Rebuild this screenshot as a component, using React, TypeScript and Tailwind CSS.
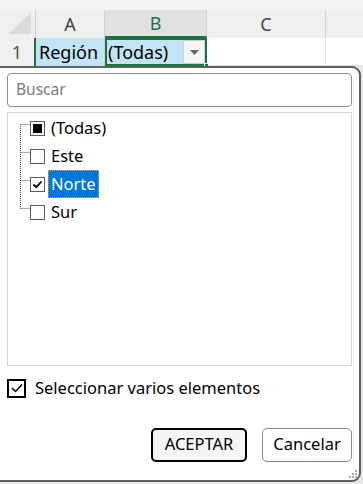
import React from 'react';

const font = { fontFamily: '"Noto Sans", "Open Sans", sans-serif' };

function TreeCheck({ state }: { state: 'none' | 'checked' | 'mixed' }) {
  return (
    <span className="w-[15px] h-[15px] border border-[#5c5c5c] bg-white flex items-center justify-center shrink-0">
      {state === 'mixed' && <span className="w-[9px] h-[9px] bg-black" />}
      {state === 'checked' && (
        <svg width="11" height="11" viewBox="0 0 11 11">
          <path d="M1.5 5.5 L4.2 8.2 L9.5 2.5" stroke="#000" strokeWidth="1.8" fill="none" />
        </svg>
      )}
    </span>
  );
}

export default function App() {
  const items: { label: string; state: 'none' | 'checked' | 'mixed'; selected?: boolean }[] = [
    { label: '(Todas)', state: 'mixed' },
    { label: 'Este', state: 'none' },
    { label: 'Norte', state: 'checked', selected: true },
    { label: 'Sur', state: 'none' },
  ];

  return (
    <div className="relative w-[363px] h-[484px] overflow-hidden bg-white text-black" style={font}>
      {/* hoja */}
      <div className="h-[10px] bg-[#f3f3f3]" />
      <div className="flex h-[28px] bg-[#efefef] text-[18px] text-[#444]">
        <div className="relative w-[36px] border-r border-[#d0d0d0]">
          <svg className="absolute right-[4px] bottom-[4px]" width="22" height="22" viewBox="0 0 22 22">
            <polygon points="22,0 22,22 0,22" fill="#dcdcdc" />
          </svg>
        </div>
        <div className="w-[69px] border-r border-[#d0d0d0] flex items-center justify-center">A</div>
        <div className="w-[102px] border-r border-[#d0d0d0] bg-[#e1e1e1] border-b-2 border-b-[#1e7145] text-[#1e7145] flex items-center justify-center">B</div>
        <div className="w-[119px] border-r border-[#d0d0d0] flex items-center justify-center">C</div>
        <div className="flex-1" />
      </div>
      <div className="flex h-[28px] text-[18px]">
        <div className="w-[36px] bg-[#efefef] border-r-2 border-[#1e7145] text-[#3d6b2c] flex items-center justify-center">1</div>
        <div className="w-[69px] bg-[#c3e4f4] border-r border-[#d0d0d0] flex items-center pl-[3px]">Región</div>
        <div className="relative w-[102px] bg-[#c3e4f4] border-2 border-[#1e7145] flex items-center pl-[1px]">
          (Todas)
          <div className="absolute right-[0px] top-[0px] w-[22px] h-[24px] bg-[#f5f5f5] border border-[#cfcfcf] flex items-center justify-center">
            <svg width="9" height="5" viewBox="0 0 9 5">
              <polygon points="0,0 9,0 4.5,5" fill="#666" />
            </svg>
          </div>
          <span className="absolute right-[-4px] bottom-[-4px] w-[5px] h-[5px] bg-[#1e7145] border border-white" />
        </div>
        <div className="w-[119px] border-r border-b border-[#e1e1e1]" />
        <div className="flex-1 border-b border-[#e1e1e1]" />
      </div>
      <div className="h-[420px] bg-[#e6e6e6]" />

      {/* menú de filtro */}
      <div className="absolute left-[-4px] top-[66px] w-[365px] h-[416px] bg-white border-2 border-[#606060] rounded-r-[9px] flex flex-col pl-[9px] pr-[7px] pt-[5px]">
        <div className="h-[34px] border border-[#8c8c8c] rounded-[4px] flex items-center px-[8px] text-[15.5px] text-[#7a7a7a]">
          Buscar
        </div>
        <div className="relative mt-[5px] h-[254px] border border-[#d6d6d6] pt-[1px]">
          <svg className="absolute left-[12px] top-[11px]" width="12" height="86" viewBox="0 0 12 86">
            <path d="M0.5 0 V85 M0.5 0.5 H11 M0.5 28.5 H11 M0.5 56.5 H11 M0.5 84.5 H11" stroke="#555" strokeWidth="1" strokeDasharray="1 1" fill="none" />
          </svg>
          <div className="flex flex-col pl-[22px]">
            {items.map((it) => (
              <div key={it.label} className="h-[28px] flex items-center gap-[3px] text-[16.5px]">
                <TreeCheck state={it.state} />
                <span
                  className={
                    it.selected
                      ? 'bg-[#0078d7] text-white px-[2px] h-[28px] flex items-center border border-dotted border-[#f0a040]'
                      : 'px-[3px]'
                  }
                >
                  {it.label}
                </span>
              </div>
            ))}
          </div>
        </div>
        <div className="mt-[10px] flex items-center gap-[9px] text-[16.5px]">
          <span className="w-[19px] h-[19px] border-2 border-black flex items-center justify-center">
            <svg width="12" height="10" viewBox="0 0 12 10">
              <path d="M1 5 L4.5 8.5 L11 1.5" stroke="#000" strokeWidth="1.5" fill="none" />
            </svg>
          </span>
          Seleccionar varios elementos
        </div>
        <div className="mt-[27px] flex justify-end gap-[15px]">
          <button className="w-[96px] h-[34px] border-2 border-black rounded-[5px] bg-[#f5f5f5] text-[16.5px]">ACEPTAR</button>
          <button className="w-[90px] h-[34px] border border-[#8a8a8a] rounded-[5px] bg-white text-[16.5px]">Cancelar</button>
        </div>
        <svg className="absolute right-[1px] bottom-[1px]" width="10" height="10" viewBox="0 0 10 10">
          <rect x="7" y="1" width="2" height="2" fill="#aaa" />
          <rect x="4" y="4" width="2" height="2" fill="#aaa" />
          <rect x="7" y="4" width="2" height="2" fill="#aaa" />
          <rect x="1" y="7" width="2" height="2" fill="#aaa" />
          <rect x="4" y="7" width="2" height="2" fill="#aaa" />
          <rect x="7" y="7" width="2" height="2" fill="#aaa" />
        </svg>
      </div>
    </div>
  );
}
